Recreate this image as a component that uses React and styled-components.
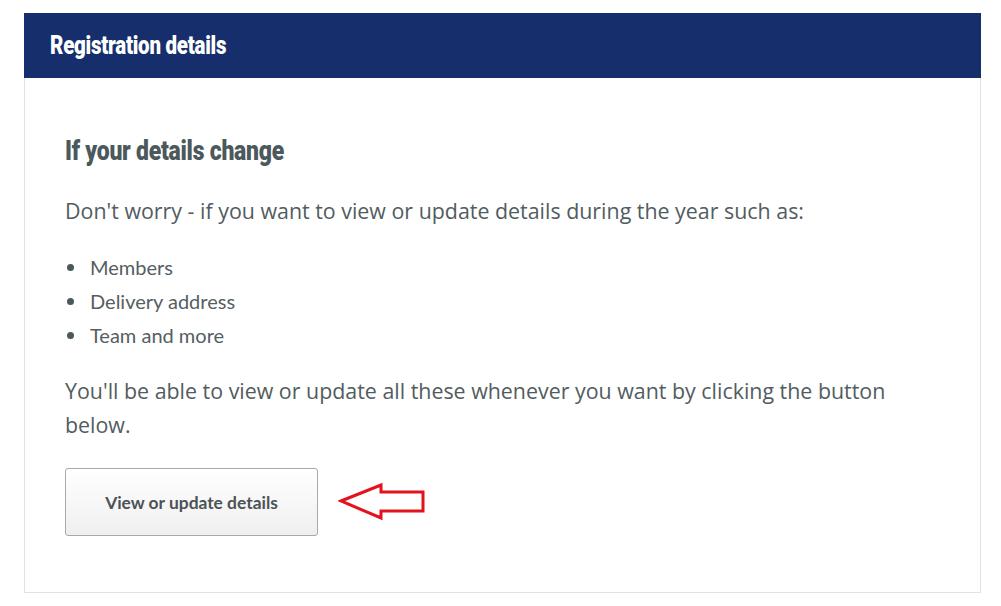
import React from "react";
import styled, { createGlobalStyle } from "styled-components";

const Global = createGlobalStyle`
  html, body { margin: 0; padding: 0; background: #fff; }
  body { font-family: "Open Sans", "Liberation Sans", sans-serif; }
`;

const Page = styled.div`
  padding: 13px 20px 0 24px;
`;

const Card = styled.section`
  width: 957px;
  box-sizing: border-box;
  border: 1px solid #e2e2e2;
  border-top: none;
`;

const Header = styled.header`
  background: #162f6c;
  height: 65px;
  margin: 0 -1px;
  display: flex;
  align-items: center;
  padding-left: 26px;
`;

const HeaderTitle = styled.h2`
  display: inline-block;
  margin: 0;
  color: #fff;
  font-family: Roboto, "Liberation Sans", sans-serif;
  font-weight: 900;
  font-size: 25px;
  letter-spacing: -0.3px;
  transform: scaleX(0.82);
  transform-origin: left center;
`;

const Body = styled.div`
  padding: 58px 40px 56px 40px;
  color: #4f5a5d;
`;

const Heading = styled.h3`
  display: inline-block;
  margin: 0 0 28px;
  font-family: Roboto, "Liberation Sans", sans-serif;
  font-weight: 900;
  font-size: 28px;
  line-height: 30px;
  letter-spacing: -0.3px;
  color: #4b585c;
  transform: scaleX(0.82);
  transform-origin: left center;
`;

const Para = styled.p`
  margin: 0;
  font-family: "Open Sans", sans-serif;
  font-size: 21.4px;
  line-height: 34px;
  color: #525c60;
`;

const List = styled.ul`
  margin: 22px 0 22px;
  padding: 0;
  list-style: none;
`;

const Item = styled.li`
  display: flex;
  align-items: center;
  font-family: Lato, sans-serif;
  font-size: 20px;
  line-height: 34px;
  color: #555e62;
  &::before {
    content: "";
    width: 7px;
    height: 7px;
    border-radius: 50%;
    background: #4b585c;
    margin: 0 16px 0 2px;
  }
`;

const Actions = styled.div`
  display: flex;
  align-items: center;
  margin-top: 26px;
  gap: 20px;
`;

const Button = styled.button`
  width: 253px;
  height: 68px;
  border: 1px solid #a9a9a9;
  border-radius: 3px;
  background: linear-gradient(#ffffff, #efefef);
  font-family: Lato, sans-serif;
  font-weight: 700;
  font-size: 17.4px;
  color: #4b5356;
  cursor: pointer;
`;

function Arrow() {
  return (
    <svg width="90" height="40" viewBox="0 0 90 40" aria-hidden="true">
      <polygon
        points="3,19 43,3 43,10 85,10 85,29 43,29 43,36"
        fill="none"
        stroke="#e3121d"
        strokeWidth="3"
        strokeLinejoin="miter"
      />
    </svg>
  );
}

export default function App() {
  return (
    <Page>
      <Global />
      <Card>
        <Header>
          <HeaderTitle>Registration details</HeaderTitle>
        </Header>
        <Body>
          <Heading>If your details change</Heading>
          <Para>Don't worry - if you want to view or update details during the year such as:</Para>
          <List>
            <Item>Members</Item>
            <Item>Delivery address</Item>
            <Item>Team and more</Item>
          </List>
          <Para>
            You'll be able to view or update all these whenever you want by clicking the button below.
          </Para>
          <Actions>
            <Button>View or update details</Button>
            <Arrow />
          </Actions>
        </Body>
      </Card>
    </Page>
  );
}
